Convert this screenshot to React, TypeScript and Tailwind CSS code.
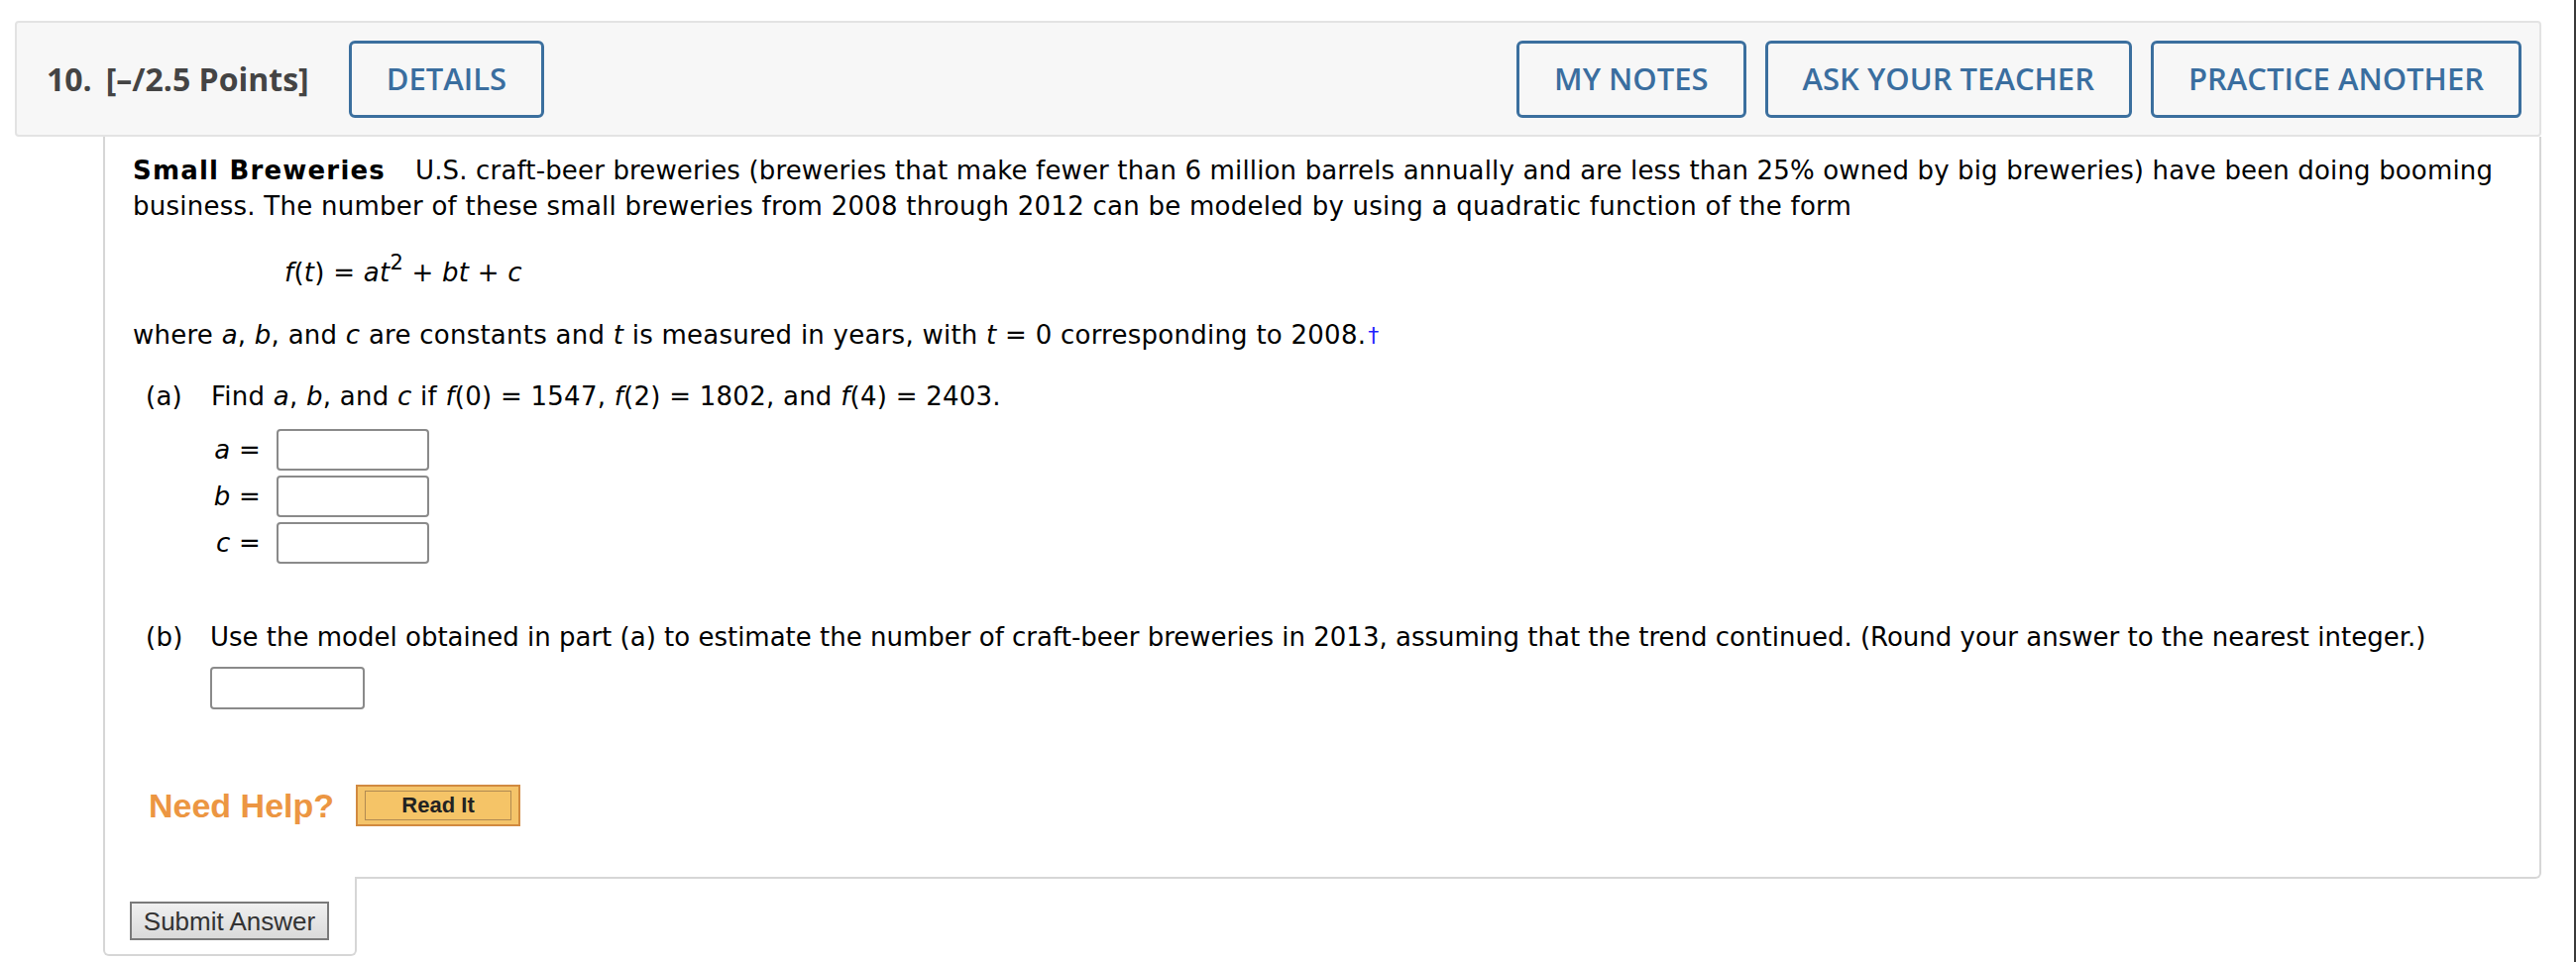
import React from "react";

const body = { fontFamily: '"DejaVu Sans", Verdana, sans-serif' };
const head = { fontFamily: '"Open Sans", sans-serif' };
const arial = { fontFamily: '"Liberation Sans", Arial, sans-serif' };

const HeaderButton = ({ label }: { label: string }) => (
  <button
    style={head}
    className="h-[78px] px-[35px] border-[3px] border-[#3b6f9e] rounded-[6px] text-[31px] font-semibold text-[#3a6e9f] bg-[#f7f7f7] leading-none"
  >
    {label}
  </button>
);

const AnswerBox = ({ w = "w-[154px]" }: { w?: string }) => (
  <div className={`${w} h-[42px] border-2 border-[#8a8a8a] rounded-[4px] bg-white`} />
);

const App = () => {
  return (
    <div className="w-[2599px] h-[971px] bg-white flex">
      <div className="flex-1 pt-[21px] pl-[15px]">
        {/* question header */}
        <div className="w-[2549px] h-[117px] bg-[#f7f7f7] border-2 border-[#e3e3e3] rounded-[4px] flex items-center pl-[30px] pr-[18px]">
          <p style={head} className="text-[32px] font-bold text-[#444] whitespace-pre">
            10.<span className="ml-[14px]">[–/2.5 Points]</span>
          </p>
          <div className="ml-[40px]">
            <HeaderButton label="DETAILS" />
          </div>
          <div className="ml-auto flex gap-[19px]">
            <HeaderButton label="MY NOTES" />
            <HeaderButton label="ASK YOUR TEACHER" />
            <HeaderButton label="PRACTICE ANOTHER" />
          </div>
        </div>

        {/* question body */}
        <div className="ml-[89px] w-[2460px]">
          <div
            style={body}
            className="border-x-2 border-b-2 border-[#d6d6d6] rounded-br-[6px] pl-[28px] pt-[16px] pb-[51px] text-[26px] tracking-[0.25px] leading-[36px] text-black"
          >
            <p className="whitespace-nowrap">
              <b className="tracking-[1.2px]">Small Breweries</b>
              <span className="ml-[30px] tracking-[0.15px]">
                U.S. craft-beer breweries (breweries that make fewer than 6 million barrels annually and are less than 25% owned by big breweries) have been doing booming
              </span>
              <br />
              business. The number of these small breweries from 2008 through 2012 can be modeled by using a quadratic function of the form
            </p>
            <p className="mt-[31px] ml-[153px]">
              <i>f</i>(<i>t</i>) = <i>at</i>
              <sup className="text-[21px] -top-[12px]">2</sup> + <i>bt</i> + <i>c</i>
            </p>
            <p className="mt-[27px]">
              where <i>a</i>, <i>b</i>, and <i>c</i> are constants and <i>t</i> is measured in years, with <i>t</i> = 0
              corresponding to 2008.
              <span className="text-[#1f1fff] text-[22px] align-top relative top-[1px] ml-[2px]">†</span>
            </p>

            {/* part a */}
            <div className="mt-[26px] pl-[13px] flex">
              <span className="w-[66px]">(a)</span>
              <div>
                <p>
                  Find <i>a</i>, <i>b</i>, and <i>c</i> if <i>f</i>(0) = 1547, <i>f</i>(2) = 1802, and <i>f</i>(4) = 2403.
                </p>
                <div className="mt-[15px] flex flex-col gap-[5px]">
                  {["a", "b", "c"].map((v) => (
                    <div key={v} className="flex items-center">
                      <span className="w-[50px] text-right whitespace-pre">
                        <i>{v}</i> =
                      </span>
                      <div className="ml-[16px]">
                        <AnswerBox />
                      </div>
                    </div>
                  ))}
                </div>
              </div>
            </div>

            {/* part b */}
            <div className="mt-[56px] pl-[13px] flex">
              <span className="w-[65px]">(b)</span>
              <div>
                <p className="tracking-[0px]">
                  Use the model obtained in part (a) to estimate the number of craft-beer breweries in 2013, assuming that the trend continued. (Round your answer to the nearest integer.)
                </p>
                <div className="mt-[12px]">
                  <div className="w-[156px] h-[43px] border-2 border-[#8a8a8a] rounded-[4px] bg-white" />
                </div>
              </div>
            </div>

            {/* help */}
            <div className="mt-[76px] pl-[16px] flex items-center">
              <span style={arial} className="text-[34px] font-bold text-[#ec9642] leading-none tracking-normal">
                Need Help?
              </span>
              <div className="ml-[22px] w-[166px] h-[42px] border-2 border-[#d18a40] bg-[#f4c46a] px-[7px] py-[4px]">
                <div
                  style={arial}
                  className="h-full border border-[#b08a52] bg-[#f5c467] flex items-center justify-center text-[22px] font-bold text-[#222] leading-none tracking-normal"
                >
                  Read It
                </div>
              </div>
            </div>
          </div>

          {/* submit tab */}
          <div className="-mt-[2px] w-[256px] h-[80px] bg-white border-x-2 border-b-2 border-[#d6d6d6] rounded-b-[6px] pl-[25px] pt-[25px]">
            <button
              style={arial}
              className="w-[201px] h-[39px] border-2 border-[#7a7a7a] bg-gradient-to-b from-[#f0f0f0] to-[#dadada] text-[26px] text-[#333] leading-none"
            >
              Submit Answer
            </button>
          </div>
        </div>
      </div>
      <div className="w-[2px] bg-[#3a3a3a]" />
    </div>
  );
};

export default App;
